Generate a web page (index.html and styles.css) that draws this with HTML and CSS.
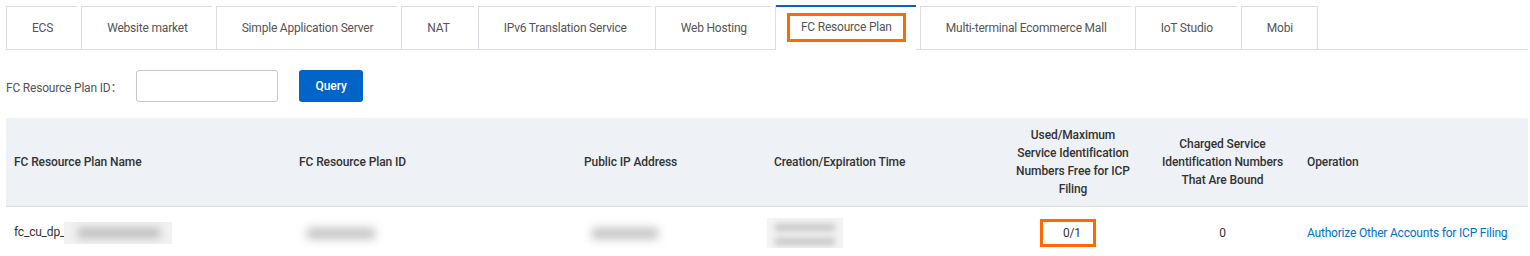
FILE: index.html
```html
<!DOCTYPE html>
<html lang="en">
<head>
<meta charset="utf-8">
<title>FC Resource Plan</title>
<link rel="stylesheet" href="styles.css">
</head>
<body>
  <ul class="tabs">
    <li class="tab">ECS</li>
    <li class="tab">Website market</li>
    <li class="tab">Simple Application Server</li>
    <li class="tab">NAT</li>
    <li class="tab">IPv6 Translation Service</li>
    <li class="tab">Web Hosting</li>
    <li class="tab tab-active"><span class="mark mark-tab">FC Resource Plan</span></li>
    <li class="tab">Multi-terminal Ecommerce Mall</li>
    <li class="tab">IoT Studio</li>
    <li class="tab tab-last">Mobi</li>
  </ul>

  <div class="search">
    <label class="search-label" for="planId">FC Resource Plan ID<span class="colon">：</span></label>
    <input class="search-input" id="planId" type="text">
    <button class="btn-primary" type="button">Query</button>
  </div>

  <table class="grid">
    <colgroup>
      <col class="c-name">
      <col class="c-id">
      <col class="c-ip">
      <col class="c-time">
      <col class="c-used">
      <col class="c-charged">
      <col class="c-op">
    </colgroup>
    <thead>
      <tr>
        <th>FC Resource Plan Name</th>
        <th>FC Resource Plan ID</th>
        <th>Public IP Address</th>
        <th>Creation/Expiration Time</th>
        <th class="center narrow">Used/Maximum Service Identification Numbers Free for ICP Filing</th>
        <th class="center narrow">Charged Service Identification Numbers That Are Bound</th>
        <th>Operation</th>
      </tr>
    </thead>
    <tbody>
      <tr>
        <td>fc_cu_dp_<span class="mask mask-name"><span class="mask-ink"></span></span></td>
        <td><span class="soft soft-id"></span></td>
        <td><span class="soft soft-ip"></span></td>
        <td><span class="mask mask-time"><span class="mask-line"></span><span class="mask-line"></span></span></td>
        <td class="center narrow"><span class="mark mark-cell">0/1</span></td>
        <td class="center narrow">0</td>
        <td><a class="link" href="#">Authorize Other Accounts for ICP Filing</a></td>
      </tr>
    </tbody>
  </table>
</body>
</html>
```

FILE: styles.css
```css
html, body {
  margin: 0;
  background: #ffffff;
}

body {
  padding: 5px 2px 0 6px;
  font-family: Roboto, "Helvetica Neue", Arial, "Noto Sans CJK SC", sans-serif;
  font-size: 12px;
  letter-spacing: -0.2px;
  color: #333333;
}

/* ---------- tabs ---------- */
.tabs {
  list-style: none;
  margin: 0;
  padding: 0;
  display: flex;
  align-items: flex-end;
  border-bottom: 1px solid #dcdee3;
}

.tab {
  box-sizing: border-box;
  height: 43px;
  padding: 0 24px 0 25px;
  margin-right: 4px;
  display: flex;
  align-items: center;
  justify-content: center;
  border-left: 1px solid #dcdee3;
  background: linear-gradient(#dcdee3, #dcdee3) no-repeat 0 0 / 100% 1px;
  color: #555555;
  white-space: nowrap;
}

.tab-last {
  border-right: 1px solid #dcdee3;
}

.tab-active {
  height: 45px;
  margin-bottom: -1px;
  background: #ffffff linear-gradient(#0064c8, #0064c8) no-repeat 0 0 / 100% 2px;
}

.mark {
  display: inline-block;
  line-height: 17px;
  outline: 3px solid #ff6a00;
}

.mark-tab {
  padding: 3px 11px;
  margin: 0 -11px;
}

/* ---------- search ---------- */
.search {
  display: flex;
  align-items: center;
  margin-top: 20px;
  height: 32px;
}

.search-label {
  color: #555555;
  margin-right: 14px;
}

.colon {
  font-family: "Noto Sans CJK SC", sans-serif;
}

.search-input {
  box-sizing: border-box;
  width: 142px;
  height: 32px;
  margin: 0 21px 0 0;
  border: 1px solid #c4c6cf;
  border-radius: 3px;
  background: #ffffff;
}

.btn-primary {
  box-sizing: border-box;
  width: 64px;
  height: 32px;
  border: 0;
  border-radius: 3px;
  background: #0064c8;
  color: #ffffff;
  font-family: Roboto, Arial, sans-serif;
  font-size: 12px;
  font-weight: 500;
}

/* ---------- table ---------- */
.grid {
  width: 100%;
  margin-top: 16px;
  border-collapse: collapse;
  table-layout: fixed;
}

.c-name { width: 285px; }
.c-id { width: 285px; }
.c-ip { width: 190px; }
.c-time { width: 234px; }
.c-used { width: 146px; }
.c-charged { width: 153px; }
.c-op { width: 229px; }

.grid th {
  background: #eef1f6;
  border-bottom: 1px solid #dcdee3;
  padding: 8px;
  line-height: 18px;
  font-weight: 500;
  letter-spacing: -0.1px;
  color: #333333;
  text-align: left;
  vertical-align: middle;
}

.grid td {
  padding: 8px;
  line-height: 18px;
  color: #333333;
  vertical-align: middle;
  white-space: nowrap;
}

.grid .center {
  text-align: center;
}

.grid .narrow {
  padding-left: 12px;
  padding-right: 12px;
}

.link {
  color: #0070cc;
  text-decoration: none;
}

.mark-cell {
  padding: 3px 12px 2px 20px;
  margin-left: -10px;
  color: #333333;
}

/* blurred / masked values */
.mask {
  display: inline-block;
  vertical-align: middle;
  background: #f1f1f1;
  overflow: hidden;
}

.mask-name {
  width: 108px;
  height: 22px;
  margin-left: -1px;
}

.mask-ink {
  display: block;
  margin: 6px 12px 0 14px;
  height: 10px;
  background: #bdbdbd;
  filter: blur(4px);
}

.mask-time {
  box-sizing: border-box;
  width: 76px;
  height: 30px;
  margin: 3px 0 3px -7px;
  padding-top: 3px;
  background: #f4f4f4;
}

.mask-line {
  display: block;
  margin: 3px 8px 7px 8px;
  height: 7px;
  background: #c4c4c4;
  filter: blur(3px);
}

.soft {
  display: inline-block;
  vertical-align: middle;
  height: 11px;
  background: #c2c2c2;
  filter: blur(5px);
}

.soft-id {
  width: 68px;
  margin-left: 8px;
}

.soft-ip {
  width: 66px;
  margin-left: 8px;
}
```
